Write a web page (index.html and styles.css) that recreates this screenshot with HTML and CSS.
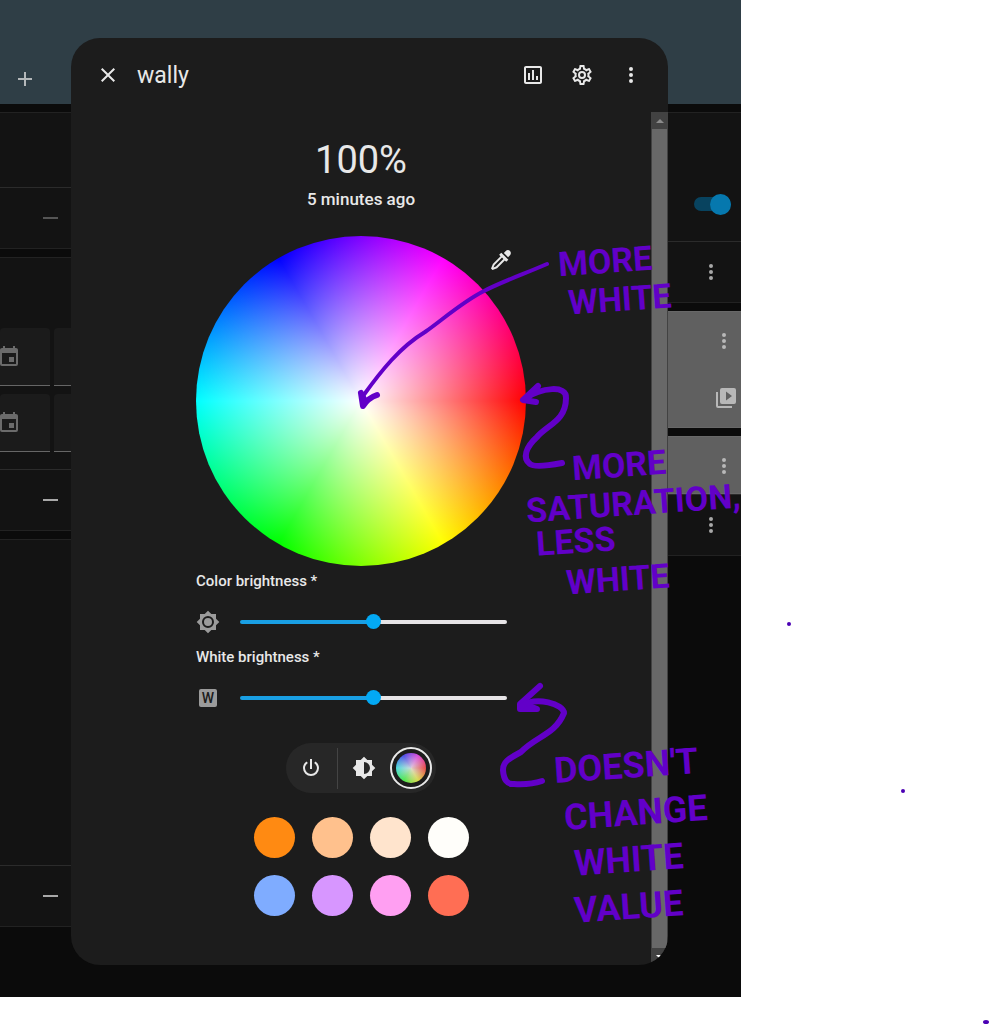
FILE: index.html
```html
<!DOCTYPE html>
<html lang="en">
<head>
    <meta charset="UTF-8">
    <meta name="viewport" content="width=device-width, initial-scale=1.0">
    <title>wally</title>
    <link rel="stylesheet" href="styles.css">
</head>
<body>
    <!-- Shared icons -->
    <svg class="sprite" aria-hidden="true">
        <symbol id="dots" viewBox="0 0 24 24"><path d="M12,16A2,2 0 0,1 14,18A2,2 0 0,1 12,20A2,2 0 0,1 10,18A2,2 0 0,1 12,16M12,10A2,2 0 0,1 14,12A2,2 0 0,1 12,14A2,2 0 0,1 10,12A2,2 0 0,1 12,10M12,4A2,2 0 0,1 14,6A2,2 0 0,1 12,8A2,2 0 0,1 10,6A2,2 0 0,1 12,4Z"/></symbol>
        <symbol id="calendar" viewBox="0 0 24 24"><path d="M19,19H5V8H19M16,1V3H8V1H6V3H5C3.89,3 3,3.89 3,5V19A2,2 0 0,0 5,21H19A2,2 0 0,0 21,19V5C21,3.89 20.1,3 19,3H18V1M17,12H12V17H17V12Z"/></symbol>
    </svg>

    <div class="page">
        <div class="app">
            <!-- Dashboard behind the dialog -->
            <header class="topbar">
                <button class="icon-btn" aria-label="Add"><svg viewBox="0 0 24 24"><path d="M19,13H13V19H11V13H5V11H11V5H13V11H19V13Z"/></svg></button>
            </header>
            <main class="board">
                <div class="column left">
                    <section class="card">
                        <div class="space small"></div>
                        <div class="row"><span class="dash dim"></span></div>
                    </section>
                    <section class="card">
                        <div class="fields">
                            <button class="field" aria-label="Start date"><svg><use href="#calendar"/></svg></button>
                            <button class="field" aria-label="Start time"></button>
                            <button class="field" aria-label="End date"><svg><use href="#calendar"/></svg></button>
                            <button class="field" aria-label="End time"></button>
                        </div>
                        <div class="row"><span class="dash"></span></div>
                    </section>
                    <section class="card">
                        <div class="space large"></div>
                        <div class="row"><span class="dash"></span></div>
                    </section>
                </div>
                <div class="column right">
                    <section class="card">
                        <div class="switch-row"><input class="switch" type="checkbox" role="switch" aria-label="Lights" checked></div>
                        <div class="row inset"><button class="icon-btn" aria-label="More"><svg><use href="#dots"/></svg></button></div>
                    </section>
                    <section class="card media tall">
                        <button class="icon-btn" aria-label="More"><svg><use href="#dots"/></svg></button>
                        <button class="icon-btn" aria-label="Browse media"><svg viewBox="0 0 24 24"><path d="M4,6H2V20A2,2 0 0,0 4,22H18V20H4V6M20,2H8A2,2 0 0,0 6,4V16A2,2 0 0,0 8,18H20A2,2 0 0,0 22,16V4A2,2 0 0,0 20,2M12,14.5V5.5L18,10L12,14.5Z"/></svg></button>
                    </section>
                    <section class="card media">
                        <button class="icon-btn" aria-label="More"><svg><use href="#dots"/></svg></button>
                    </section>
                    <section class="card joined">
                        <div class="row inset"><button class="icon-btn" aria-label="More"><svg><use href="#dots"/></svg></button></div>
                    </section>
                </div>
            </main>

            <!-- Light dialog -->
            <div class="dialog" role="dialog" aria-labelledby="title">
                <div class="dialog-head">
                    <button class="icon-btn" aria-label="Close"><svg viewBox="0 0 24 24"><path d="M19,6.41L17.59,5L12,10.59L6.41,5L5,6.41L10.59,12L5,17.59L6.41,19L12,13.41L17.59,19L19,17.59L13.41,12L19,6.41Z"/></svg></button>
                    <h1 id="title">wally</h1>
                    <button class="icon-btn" aria-label="History"><svg viewBox="0 0 24 24"><path d="M9 17H7V10H9V17M13 17H11V7H13V17M17 17H15V13H17V17M19 19H5V5H19V19.1M19 3H5C3.9 3 3 3.9 3 5V19C3 20.1 3.9 21 5 21H19C20.1 21 21 20.1 21 19V5C21 3.9 20.1 3 19 3Z"/></svg></button>
                    <button class="icon-btn" aria-label="Settings"><svg viewBox="0 0 24 24"><path d="M12,8A4,4 0 0,1 16,12A4,4 0 0,1 12,16A4,4 0 0,1 8,12A4,4 0 0,1 12,8M12,10A2,2 0 0,0 10,12A2,2 0 0,0 12,14A2,2 0 0,0 14,12A2,2 0 0,0 12,10M10,22C9.75,22 9.54,21.82 9.5,21.58L9.13,18.93C8.5,18.68 7.96,18.34 7.44,17.94L4.95,18.95C4.73,19.03 4.46,18.95 4.34,18.73L2.34,15.27C2.21,15.05 2.27,14.78 2.46,14.63L4.57,12.97L4.5,12L4.57,11L2.46,9.37C2.27,9.22 2.21,8.95 2.34,8.73L4.34,5.27C4.46,5.05 4.73,4.96 4.95,5.05L7.44,6.05C7.96,5.66 8.5,5.32 9.13,5.07L9.5,2.42C9.54,2.18 9.75,2 10,2H14C14.25,2 14.46,2.18 14.5,2.42L14.87,5.07C15.5,5.32 16.04,5.66 16.56,6.05L19.05,5.05C19.27,4.96 19.54,5.05 19.66,5.27L21.66,8.73C21.79,8.95 21.73,9.22 21.54,9.37L19.43,11L19.5,12L19.43,13L21.54,14.63C21.73,14.78 21.79,15.05 21.66,15.27L19.66,18.73C19.54,18.95 19.27,19.04 19.05,18.95L16.56,17.95C16.04,18.34 15.5,18.68 14.87,18.93L14.5,21.58C14.46,21.82 14.25,22 14,22H10M11.25,4L10.88,6.61C9.68,6.86 8.62,7.5 7.85,8.39L5.44,7.35L4.69,8.65L6.8,10.2C6.4,11.37 6.4,12.64 6.8,13.8L4.68,15.36L5.43,16.66L7.86,15.62C8.63,16.5 9.68,17.14 10.87,17.38L11.24,20H12.76L13.13,17.39C14.32,17.14 15.37,16.5 16.14,15.62L18.57,16.66L19.32,15.36L17.2,13.81C17.6,12.64 17.6,11.37 17.2,10.2L19.31,8.65L18.56,7.35L16.15,8.39C15.38,7.5 14.32,6.86 13.12,6.62L12.75,4H11.25Z"/></svg></button>
                    <button class="icon-btn" aria-label="Menu"><svg><use href="#dots"/></svg></button>
                </div>
                <div class="dialog-body">
                    <div class="content">
                        <p class="state">100%</p>
                        <p class="changed">5 minutes ago</p>
                        <div class="controls">
                            <div class="wheel"></div>
                            <button class="icon-btn picker" aria-label="Pick a color"><svg viewBox="0 0 24 24"><path d="M19.35,11.72L17.22,13.85L15.81,12.43L8.1,20.14L3.5,22L2,20.5L3.86,15.9L11.57,8.19L10.15,6.78L12.28,4.65L19.35,11.72M16.76,3C17.93,1.83 19.83,1.83 21,3C22.17,4.17 22.17,6.07 21,7.24L19.08,9.16L14.84,4.92L16.76,3M5.56,17.03L4.5,19.5L6.97,18.44L14.4,11L13,9.6L5.56,17.03Z"/></svg></button>
                            <label for="color">Color brightness *</label>
                            <div class="slider-row">
                                <svg viewBox="0 0 24 24"><path d="M12,8A4,4 0 0,0 8,12A4,4 0 0,0 12,16A4,4 0 0,0 16,12A4,4 0 0,0 12,8M12,18A6,6 0 0,1 6,12A6,6 0 0,1 12,6A6,6 0 0,1 18,12A6,6 0 0,1 12,18M20,8.69V4H15.31L12,0.69L8.69,4H4V8.69L0.69,12L4,15.31V20H8.69L12,23.31L15.31,20H20V15.31L23.31,12L20,8.69Z"/></svg>
                                <input id="color" type="range" min="0" max="100" value="50">
                            </div>
                            <label for="white">White brightness *</label>
                            <div class="slider-row">
                                <span class="w-box">W</span>
                                <input id="white" type="range" min="0" max="100" value="50">
                            </div>
                        </div>
                        <div class="modes">
                            <button class="icon-btn" aria-label="Power"><svg viewBox="0 0 24 24"><path d="M16.56,5.44L15.11,6.89C16.84,7.94 18,9.83 18,12A6,6 0 0,1 12,18A6,6 0 0,1 6,12C6,9.83 7.16,7.94 8.88,6.88L7.44,5.44C5.36,6.88 4,9.28 4,12A8,8 0 0,0 12,20A8,8 0 0,0 20,12C20,9.28 18.64,6.88 16.56,5.44M13,3H11V13H13"/></svg></button>
                            <span class="divider"></span>
                            <button class="icon-btn" aria-label="Brightness"><svg viewBox="0 0 24 24"><path d="M12,18V6A6,6 0 0,1 18,12A6,6 0 0,1 12,18M20,15.31L23.31,12L20,8.69V4H15.31L12,0.69L8.69,4H4V8.69L0.69,12L4,15.31V20H8.69L12,23.31L15.31,20H20V15.31Z"/></svg></button>
                            <button class="color-mode" aria-label="Color"><span class="wheel"></span></button>
                        </div>
                        <div class="swatches">
                            <button class="swatch orange" aria-label="Orange"></button>
                            <button class="swatch peach" aria-label="Peach"></button>
                            <button class="swatch cream" aria-label="Cream"></button>
                            <button class="swatch white" aria-label="White"></button>
                            <button class="swatch blue" aria-label="Blue"></button>
                            <button class="swatch purple" aria-label="Purple"></button>
                            <button class="swatch pink" aria-label="Pink"></button>
                            <button class="swatch red" aria-label="Red"></button>
                        </div>
                    </div>
                    <div class="scrollbar">
                        <span class="arrow up"></span>
                        <span class="thumb"></span>
                        <span class="arrow down"></span>
                    </div>
                </div>
            </div>
        </div>

        <!-- Pen notes -->
        <svg class="ink" width="990" height="1024" viewBox="0 0 990 1024" aria-hidden="true">
            <path class="thin" d="M547 264C524 274 501 282 484 291C462 302 441 321 425 332C400 347 381 371 363 396"/>
            <path d="M361 393L363 406Q368 398 377 395M361 393L364 399"/>
            <path d="M538 386L523 400L536 402M524 399C542 387 567 385 566 398C566 421 547 425 537 437C526 447 522 458 530 464Q535 468 562 463"/>
            <path d="M540 686L520 704L520 709L537 709L524 704"/>
            <path d="M522 706C536 696 564 704 564 713C555 735 536 736 521 752C508 759 503 762 503 770Q504 785 514 784Q530 785 542 781"/>
            <circle cx="789" cy="624" r="2"/>
            <circle cx="903" cy="791" r="2"/>
            <ellipse cx="986" cy="1022" rx="3" ry="2"/>
        </svg>
        <div class="note note-center">
            <p>MORE</p>
            <p class="in-1">WHITE</p>
        </div>
        <div class="note note-edge">
            <p class="in-3">MORE</p>
            <p>SATURATION,</p>
            <p class="in-1">LESS</p>
            <p class="in-2">WHITE</p>
        </div>
        <div class="note note-white">
            <p>DOESN'T</p>
            <p class="in-1">CHANGE</p>
            <p class="in-2">WHITE</p>
            <p class="in-2">VALUE</p>
        </div>
    </div>
</body>
</html>
```

FILE: styles.css
```css
* {
    box-sizing: border-box;
}
body {
    margin: 0;
    background-color: #fff;
    font-family: Roboto, Arial, sans-serif;
    color: #e8e8e8;
}
h1, p {
    margin: 0;
}
button {
    padding: 0;
    border: none;
    background: none;
    color: inherit;
    cursor: pointer;
}
svg {
    display: block;
    fill: currentColor;
}
.sprite {
    position: absolute;
    width: 0;
    height: 0;
}
.page {
    position: relative;
    min-height: 100vh;
    padding: 0 249px 27px 0;
    overflow: hidden;
}
.app {
    position: relative;
    min-height: 997px;
    background-color: #0b0b0b;
    overflow: hidden;
}
.icon-btn {
    flex: none;
    width: 24px;
    height: 24px;
}
.icon-btn svg {
    width: 24px;
    height: 24px;
}

/* dashboard */
.topbar {
    height: 104px;
    padding: 67px 13px 0;
    background-color: #2f3e46;
    color: #b4b8ba;
}
.board {
    display: flex;
    justify-content: space-between;
    padding-top: 8px;
    color: #a8a8a8;
}
.column {
    display: flex;
    flex-direction: column;
    gap: 8px;
    width: 120px;
}
.card {
    background-color: #131313;
    border-top: 1px solid #222;
    border-bottom: 1px solid #222;
}
.space.small {
    height: 74px;
}
.space.large {
    height: 325px;
}
.row {
    display: flex;
    align-items: center;
    height: 61px;
    border-top: 1px solid #2b2b2b;
}
.left .row {
    padding-left: 43px;
}
.dash {
    width: 15px;
    height: 2px;
    background-color: #a8a8a8;
}
.dash.dim {
    background-color: #555;
}
.fields {
    display: grid;
    grid-template-columns: 50px 1fr;
    gap: 8px 4px;
    padding: 70px 0 17px;
}
.field {
    display: flex;
    align-items: center;
    height: 58px;
    border-bottom: 1px solid #666;
    border-radius: 4px 4px 0 0;
    background-color: #1b1b1b;
    color: #6b6b6b;
}
.field svg {
    width: 24px;
    height: 24px;
    margin-left: -3px;
}
.switch-row {
    display: flex;
    justify-content: flex-end;
    align-items: center;
    height: 128px;
    padding: 54px 10px 0 0;
}
.switch {
    appearance: none;
    position: relative;
    width: 37px;
    height: 14px;
    margin: 0;
    border-radius: 7px;
    background-color: #08435f;
}
.switch::after {
    content: "";
    position: absolute;
    top: -3px;
    right: 0;
    width: 21px;
    height: 21px;
    border-radius: 50%;
    background-color: #0678ae;
}
.row.inset {
    justify-content: flex-end;
    padding-right: 18px;
}
.media {
    display: flex;
    flex-direction: column;
    align-items: flex-end;
    height: 58px;
    padding: 17px 5px;
    border-color: #686868;
    background-color: #606060;
    color: #b8b8b8;
}
.media.tall {
    justify-content: space-between;
    height: 117px;
}
.media .icon-btn + .icon-btn {
    margin-right: -2px;
}
.card.joined {
    margin-top: -8px;
    border-top: none;
}

/* dialog */
.dialog {
    position: absolute;
    inset: 38px 73px 32px 71px;
    display: flex;
    flex-direction: column;
    border-radius: 29px;
    background-color: #1c1c1c;
    overflow: hidden;
}
.dialog-head {
    display: flex;
    align-items: center;
    gap: 25px;
    height: 74px;
    padding: 0 25px;
}
.dialog-head h1 {
    flex: 1;
    margin-left: -8px;
    font-size: 23px;
    font-weight: 400;
}
.dialog-body {
    display: flex;
    flex: 1;
}
.content {
    display: flex;
    flex: 1;
    flex-direction: column;
    align-items: center;
    padding-top: 24px;
}
.state {
    font-size: 38px;
    line-height: 48px;
}
.changed {
    margin-top: 3px;
    font-size: 17px;
    font-weight: 500;
    line-height: 24px;
}
.controls {
    position: relative;
    display: flex;
    flex-direction: column;
    width: 330px;
    margin-top: 25px;
}
.wheel {
    display: block;
    aspect-ratio: 1;
    border-radius: 50%;
    background: radial-gradient(closest-side, #fff, rgba(255, 255, 255, 0)),
        conic-gradient(from 90deg, #f00, #ff0, #0f0, #0ff, #00f, #f0f, #f00);
}
.picker {
    position: absolute;
    top: 12px;
    right: 13px;
}
.controls label {
    height: 30px;
    font-size: 15px;
    font-weight: 500;
    line-height: 30px;
}
.slider-row {
    display: flex;
    align-items: center;
    gap: 20px;
    height: 46px;
    padding: 5px 19px 0 0;
    color: #9b9b9b;
}
.slider-row svg {
    width: 24px;
    height: 24px;
}
.w-box {
    width: 18px;
    margin: 0 3px;
    border-radius: 2px;
    background-color: #9b9b9b;
    color: #1c1c1c;
    font-size: 14px;
    font-weight: 500;
    line-height: 18px;
    text-align: center;
}
input[type="range"] {
    appearance: none;
    flex: 1;
    min-width: 0;
    height: 4px;
    margin: 0;
    border-radius: 2px;
    background: linear-gradient(to right, #199fe4 50%, #e6e4e6 50%);
}
input[type="range"]::-webkit-slider-thumb {
    appearance: none;
    width: 15px;
    height: 15px;
    border-radius: 50%;
    background-color: #03a9f4;
}
.modes {
    display: flex;
    align-items: center;
    gap: 14px;
    height: 50px;
    margin-top: 25px;
    padding: 0 4px 0 13px;
    border-radius: 25px;
    background-color: #272727;
}
.divider {
    width: 1px;
    height: 41px;
    background-color: #444;
}
.color-mode {
    width: 42px;
    height: 42px;
    padding: 4px;
    border: 2px solid #e8e8e8;
    border-radius: 50%;
    background-color: #1c1c1c;
}
.color-mode .wheel {
    background: radial-gradient(closest-side, rgba(220, 220, 220, 0.9), rgba(200, 200, 200, 0.15)),
        conic-gradient(from 90deg, #e33, #dd3, #3e3, #3dd, #33e, #d3d, #e33);
}
.swatches {
    display: grid;
    grid-template-columns: repeat(4, 41px);
    gap: 17px;
    margin-top: 24px;
}
.swatch {
    height: 41px;
    border-radius: 50%;
}
.orange { background-color: #ff8a12; }
.peach { background-color: #ffc18d; }
.cream { background-color: #ffe4cd; }
.white { background-color: #fffefa; }
.blue { background-color: #7facff; }
.purple { background-color: #d796ff; }
.pink { background-color: #ff9ff2; }
.red { background-color: #ff6e54; }

.scrollbar {
    display: flex;
    flex-direction: column;
    width: 17px;
    background-color: #424242;
}
.thumb {
    flex: 1;
    margin: 0 1px;
    background-color: #686868;
}
.arrow {
    display: flex;
    justify-content: center;
    align-items: center;
    height: 17px;
}
.arrow::after {
    content: "";
    border: 4px solid transparent;
}
.up::after {
    margin-bottom: 4px;
    border-bottom-color: #8b8b8b;
}
.down::after {
    margin-top: 4px;
    border-top-color: #fff;
}

/* pen notes */
.ink {
    position: absolute;
    top: 0;
    left: 0;
    fill: none;
    stroke: #6200c8;
    stroke-width: 6;
    stroke-linecap: round;
    stroke-linejoin: round;
    pointer-events: none;
}
.ink .thin {
    stroke-width: 4;
}
.ink circle, .ink ellipse {
    fill: #4b00b4;
    stroke: none;
}
.note {
    position: absolute;
    color: #6200c8;
    font-size: 34px;
    font-weight: 700;
    line-height: 38px;
    pointer-events: none;
}
.note p {
    width: fit-content;
    transform: rotate(-4deg);
}
.note-center {
    top: 242px;
    left: 558px;
}
.note-edge {
    top: 446px;
    left: 526px;
}
.note-white {
    top: 743px;
    left: 554px;
    font-size: 36px;
    line-height: 47px;
}
.in-1 {
    margin-left: 10px;
}
.in-2 {
    margin-left: 20px;
}
.note-edge .in-2 {
    margin-left: 40px;
}
.in-3 {
    margin-left: 46px;
}
```
